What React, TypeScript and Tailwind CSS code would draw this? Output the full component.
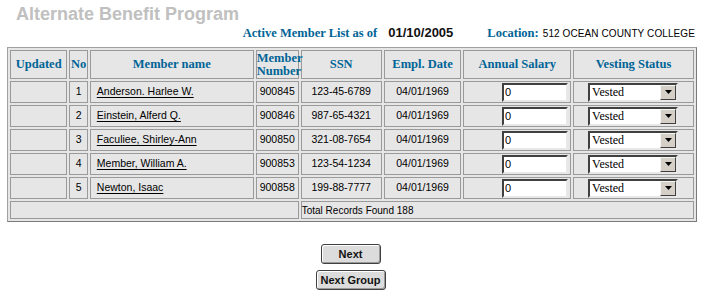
import React from "react"

// ─────────────────────────── Data ────────────────────────

type Member = {
  no: number
  name: string
  number: string
  ssn: string
  date: string
}

const MEMBERS: Member[] = [
  { no: 1, name: "Anderson. Harlee W.", number: "900845", ssn: "123-45-6789", date: "04/01/1969" },
  { no: 2, name: "Einstein, Alferd Q.", number: "900846", ssn: "987-65-4321", date: "04/01/1969" },
  { no: 3, name: "Faculiee, Shirley-Ann", number: "900850", ssn: "321-08-7654", date: "04/01/1969" },
  { no: 4, name: "Member, William A.", number: "900853", ssn: "123-54-1234", date: "04/01/1969" },
  { no: 5, name: "Newton, Isaac", number: "900858", ssn: "199-88-7777", date: "04/01/1969" },
]

const serif = "font-['Liberation_Serif','Times_New_Roman',serif]"
const sans = "font-['Liberation_Sans',Arial,sans-serif]"

const cell = "border border-[#9a9a9a] bg-[#e6e6e6] p-0"
const head = `${cell} ${serif} font-bold text-[12.5px] leading-[13px] text-[#006496] text-center align-middle`
const body = `${cell} ${sans} text-[10.5px] text-black align-middle`

// ─────────────────────────── Controls ────────────────────────

function SalaryInput() {
  return (
    <input
      readOnly
      value="0"
      className={`${sans} block ml-auto mr-[2px] w-[66px] h-[19px] bg-white text-[11px] leading-[15px] pl-[1px] border-2 border-t-[#404040] border-l-[#404040] border-b-[#e8e8e8] border-r-[#e8e8e8] outline-none`}
    />
  )
}

function VestingSelect() {
  return (
    <div className="ml-[14px] flex items-center w-[90px] h-[19px] bg-white border-2 border-t-[#404040] border-l-[#404040] border-b-[#e8e8e8] border-r-[#e8e8e8]">
      <span className={`${serif} flex-1 pl-[2px] text-[12px] leading-[15px] text-black`}>Vested</span>
      <span className="flex items-center justify-center w-[16px] h-[15px] bg-[#d4d0c8] border border-t-[#f4f4f4] border-l-[#f4f4f4] border-b-[#404040] border-r-[#404040]">
        <svg width="7" height="4" viewBox="0 0 7 4">
          <polygon points="0,0 7,0 3.5,4" fill="#000" />
        </svg>
      </span>
    </div>
  )
}

function NavButton({ label, width }: { label: string; width: string }) {
  return (
    <button
      className={`${sans} ${width} h-[20px] rounded-[3px] bg-[#dcdcdc] border border-[#404040] shadow-[inset_1px_1px_0_#ffffff,inset_-1px_-1px_0_#9a9a9a] text-[11px] font-bold leading-[16px] text-[#111]`}
    >
      {label}
    </button>
  )
}

// ─────────────────────────── Page ────────────────────────

export default function App() {
  return (
    <div className="w-[701px] h-[293px] bg-white overflow-hidden">
      <div className={`${sans} h-[26px] pt-[4px] pl-[16px] text-[18px] leading-[20px] font-bold text-[#c0c0c0]`}>
        Alternate Benefit Program
      </div>

      <div className="h-[14px] flex items-baseline justify-end pr-[6px] leading-[14px]">
        <span className={`${serif} font-bold text-[12.5px] text-[#006496]`}>Active Member List as of</span>
        <span className={`${sans} font-bold text-[13px] text-[#111] ml-[11px]`}>01/10/2005</span>
        <span className={`${serif} font-bold text-[12.5px] text-[#006496] ml-[34px]`}>Location:</span>
        <span className={`${sans} text-[10px] text-black ml-[4px] tracking-[0.1px]`}>512 OCEAN COUNTY COLLEGE</span>
      </div>

      <table className="ml-[7px] mt-[7px] w-[690px] table-fixed border-separate border-spacing-[2px] bg-[#e6e6e6] border border-[#a0a0a0] border-b-[#7a7a7a] border-r-[#7a7a7a]">
        <thead>
          <tr className="h-[29px]">
            <th className={`${head} w-[56px]`}>Updated</th>
            <th className={`${head} w-[18px]`}>No</th>
            <th className={`${head} w-[160px]`}>Member name</th>
            <th className={`${head} w-[42px] text-left`}>
              Member
              <br />
              Number
            </th>
            <th className={`${head} w-[79px]`}>SSN</th>
            <th className={`${head} w-[76px]`}>Empl. Date</th>
            <th className={`${head} w-[105px]`}>Annual Salary</th>
            <th className={`${head} w-[118px]`}>Vesting Status</th>
          </tr>
        </thead>
        <tbody>
          {MEMBERS.map((m) => (
            <tr key={m.no} className="h-[22px]">
              <td className={body}></td>
              <td className={`${body} text-center`}>{m.no}</td>
              <td className={`${body} pl-[6px]`}>
                <a className="underline underline-offset-[2px]">{m.name}</a>
              </td>
              <td className={`${body} text-center`}>{m.number}</td>
              <td className={`${body} text-center`}>{m.ssn}</td>
              <td className={`${body} text-center`}>{m.date}</td>
              <td className={body}>
                <SalaryInput />
              </td>
              <td className={body}>
                <VestingSelect />
              </td>
            </tr>
          ))}
          <tr className="h-[18px]">
            <td className={body} colSpan={4}></td>
            <td className={`${body} text-[10px]`} colSpan={4}>
              Total Records Found 188
            </td>
          </tr>
        </tbody>
      </table>

      <div className="mt-[22px] flex flex-col items-center gap-[6px]">
        <NavButton label="Next" width="w-[60px]" />
        <NavButton label="Next Group" width="w-[70px]" />
      </div>
    </div>
  )
}
